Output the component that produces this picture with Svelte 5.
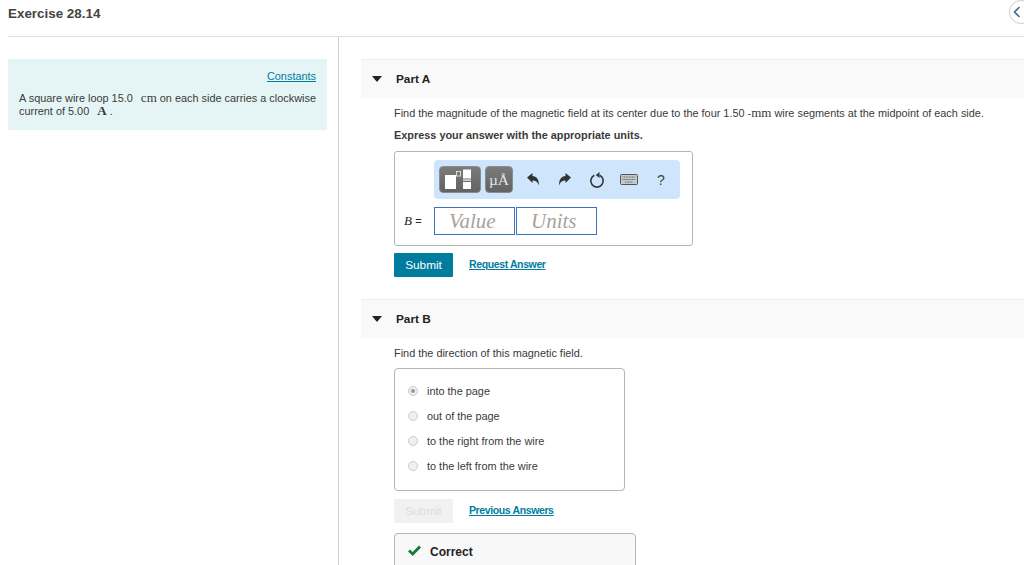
<script>
  const options = ['into the page', 'out of the page', 'to the right from the wire', 'to the left from the wire'];
</script>

<div class="page">
  <header class="top">
    <h1>Exercise 28.14</h1>
    <button class="collapse" aria-label="collapse">
      <svg width="8" height="12" viewBox="0 0 8 12"><path d="M6.5 1 1.5 6l5 5" fill="none" stroke="#4a6a8c" stroke-width="1.6" /></svg>
    </button>
  </header>

  <div class="columns">
    <aside class="left">
      <div class="intro">
        <a class="constants" href="#c">Constants</a>
        <p>A square wire loop 15.0 <span class="unit gap">cm</span> on each side carries a clockwise current of 5.00 <span class="unit gap bold">A</span> .</p>
      </div>
    </aside>

    <main class="right">
      <section>
        <div class="part-head">
          <svg class="caret" width="10" height="6" viewBox="0 0 10 6"><path d="M0 0h10L5 6z" fill="#222" /></svg>
          <span>Part A</span>
        </div>
        <div class="part-body">
          <p class="q">Find the magnitude of the magnetic field at its center due to the four 1.50 -<span class="unit">mm</span> wire segments at the midpoint of each side.</p>
          <p class="q strong">Express your answer with the appropriate units.</p>

          <div class="answer">
            <div class="toolbar">
              <div class="tool wide">
                <svg width="40" height="25" viewBox="0 0 40 25">
                  <rect x="5" y="8" width="11" height="14" fill="#fff" />
                  <rect x="16.500" y="4.500" width="4" height="4.500" fill="none" stroke="#ddd" stroke-width="1" />
                  <rect x="23" y="2.500" width="8" height="9" fill="#fff" />
                  <rect x="23" y="12.500" width="8" height="1.200" fill="#fff" />
                  <rect x="23" y="15" width="8" height="7" fill="#fff" />
                </svg>
              </div>
              <div class="tool narrow"><span>µÅ</span></div>
              <div class="action">
                <svg width="14" height="15" viewBox="0 0 14 15"><path d="M1 5.500 6.500 1v3c4 .2 6.500 3 6.500 9.500-1.200-3.500-3-5-6.500-5v2.500z" fill="#333" /></svg>
              </div>
              <div class="action">
                <svg width="14" height="15" viewBox="0 0 14 15"><path d="M13 5.500 7.500 1v3C3.500 4.200 1 7 1 13.500c1.200-3.500 3-5 6.500-5V11z" fill="#333" /></svg>
              </div>
              <div class="action">
                <svg width="16" height="17" viewBox="0 0 16 17"><path d="M5.300 4.300a6.200 6.200 0 1 0 5.400 0" fill="none" stroke="#333" stroke-width="1.600" /><path d="M10.500 1v6L6.800 4z" fill="#333" /></svg>
              </div>
              <div class="action">
                <svg width="18" height="11" viewBox="0 0 18 11"><rect x=".5" y=".5" width="17" height="10" rx="1" fill="#c4c8cd" stroke="#555" /><path d="M2.500 3h13M2.500 5.500h13M5 8h8" stroke="#666" stroke-width="1" stroke-dasharray="1 .6" /></svg>
              </div>
              <div class="action help">?</div>
            </div>
            <div class="inputs">
              <span class="var"><i>B</i> <small>=</small></span>
              <div class="field">Value</div>
              <div class="field">Units</div>
            </div>
          </div>

          <div class="submit-row">
            <button class="submit">Submit</button>
            <a href="#r">Request Answer</a>
          </div>
        </div>
      </section>

      <section class="second">
        <div class="part-head">
          <svg class="caret" width="10" height="6" viewBox="0 0 10 6"><path d="M0 0h10L5 6z" fill="#222" /></svg>
          <span>Part B</span>
        </div>
        <div class="part-body">
          <p class="q direction">Find the direction of this magnetic field.</p>
          <div class="choices">
            {#each options as option, i}
              <div class="choice">
                <span class="radio" class:on={i === 0}></span>
                <span>{option}</span>
              </div>
            {/each}
          </div>
          <div class="submit-row">
            <button class="submit off" disabled>Submit</button>
            <a href="#p">Previous Answers</a>
          </div>
          <div class="correct">
            <svg width="13" height="11" viewBox="0 0 13 11"><path d="M1 5.500 4.700 9 12 1.500" fill="none" stroke="#137a3c" stroke-width="2.800" /></svg>
            <span>Correct</span>
          </div>
        </div>
      </section>
    </main>
  </div>
</div>

<style>
  :global(body) {
    margin: 0;
    background: #fff;
    overflow: hidden;
  }

  .page {
    width: 1024px;
    height: 565px;
    overflow: hidden;
    font-family: "Liberation Sans", Arial, sans-serif;
    font-size: 10.900px;
    color: #3a3a3a;
    padding-left: 8px;
    box-sizing: border-box;
  }

  .top {
    height: 36px;
    display: flex;
    justify-content: space-between;
    border-bottom: 1px solid #dcdfe2;
    box-sizing: content-box;
  }

  h1 {
    margin: 6px 0 0;
    font-size: 13.400px;
    line-height: 15px;
    font-weight: bold;
    color: #444;
  }

  .collapse {
    width: 24px;
    height: 24px;
    margin: 0 -9px 0 0;
    padding: 0 0 0 3px;
    background: #fff;
    border: 1px solid #ccc;
    border-radius: 50%;
    display: flex;
    align-items: center;
    justify-content: flex-start;
  }

  .columns {
    display: flex;
    height: 528px;
  }

  .left {
    width: 330px;
    padding-top: 22px;
    box-sizing: content-box;
    border-right: 1px solid #c6d3dc;
  }

  .intro {
    width: 319px;
    height: 71px;
    box-sizing: border-box;
    padding: 11px 11px 0;
    background: #e5f5f6;
    line-height: 13px;
    display: flex;
    flex-direction: column;
  }

  .constants {
    align-self: flex-end;
    margin-bottom: 9px;
  }

  .intro p {
    margin: 0;
  }

  a {
    color: #007c9e;
    text-decoration: underline;
  }

  .unit {
    font-family: "Liberation Serif", serif;
    font-size: 13px;
    line-height: 0;
  }

  .gap {
    margin-left: 5px;
  }

  .bold {
    font-weight: bold;
  }

  .right {
    flex: 1;
    padding: 22px 0 0 22px;
    min-width: 0;
  }

  .part-head {
    height: 39px;
    display: flex;
    align-items: center;
    background: #f9f9f9;
    border-top: 1px solid #eee;
    box-sizing: border-box;
    font-weight: bold;
    font-size: 11.800px;
    color: #222;
  }

  .caret {
    margin: 0 14px 0 11px;
  }

  .part-body {
    padding-left: 33px;
  }

  .q {
    margin: 9px 0 0;
    line-height: 13px;
  }

  .q.strong {
    font-weight: bold;
    margin-top: 9px;
  }

  .answer {
    width: 299px;
    height: 95px;
    margin-top: 9px;
    box-sizing: border-box;
    border: 1px solid #b5b5b5;
    border-radius: 3px;
    padding: 8px 0 0 39px;
  }

  .toolbar {
    width: 246px;
    height: 39px;
    background: #cfe5fc;
    border-radius: 4px;
    display: flex;
    align-items: center;
    gap: 4px;
    padding-left: 5px;
    box-sizing: border-box;
  }

  .tool {
    height: 27px;
    background: linear-gradient(#7c7b7b, #636262);
    border: 1px solid #8c8c8c;
    border-radius: 4px;
    box-sizing: border-box;
    display: flex;
    align-items: center;
    justify-content: center;
  }

  .tool.wide {
    width: 42px;
  }

  .tool.narrow {
    width: 28px;
    color: #e4e4e4;
    font-family: "Liberation Serif", serif;
    font-size: 15.500px;
  }

  .action {
    width: 32px;
    margin-right: -4px;
    display: flex;
    align-items: center;
    justify-content: center;
  }

  .help {
    font-size: 14px;
    color: #444;
  }

  .inputs {
    display: flex;
    align-items: center;
    margin: 8px 0 0 -39px;
  }

  .var {
    width: 39px;
    box-sizing: border-box;
    padding-left: 9px;
    font-family: "Liberation Serif", serif;
    font-size: 13px;
    color: #222;
  }

  .var small {
    font-family: "Liberation Sans", Arial, sans-serif;
    font-size: 11px;
  }

  .field {
    width: 81px;
    height: 28px;
    box-sizing: border-box;
    margin-right: 1px;
    border: 1px solid #3a73c8;
    padding-left: 14px;
    font-family: "Liberation Serif", serif;
    font-style: italic;
    font-size: 21px;
    line-height: 26px;
    color: #a9a29a;
  }

  .submit-row {
    display: flex;
    align-items: center;
    gap: 16px;
    margin-top: 7px;
    font-weight: bold;
    font-size: 10.500px;
    letter-spacing: -.38px;
  }

  .submit-row a {
    margin-bottom: 3px;
  }

  .submit {
    width: 59px;
    height: 24px;
    padding: 0;
    border: 0;
    border-radius: 1px;
    background: #007c9e;
    color: #fff;
    font: 11.800px "Liberation Sans", Arial, sans-serif;
  }

  .submit.off {
    background: #f1f1f1;
    color: #ddd;
  }

  .second {
    margin-top: 22px;
  }

  .choices {
    width: 231px;
    height: 123px;
    margin-top: 8px;
    box-sizing: border-box;
    border: 1px solid #b5b5b5;
    border-radius: 4px;
    padding: 9px 0 0 13px;
  }

  .choice {
    height: 25px;
    display: flex;
    align-items: center;
    gap: 9px;
  }

  .radio {
    width: 10px;
    height: 10px;
    box-sizing: border-box;
    border: 1px solid #ccc;
    border-radius: 50%;
    background: #efefef;
    position: relative;
  }

  .radio.on::after {
    content: "";
    position: absolute;
    left: 2px;
    top: 2px;
    width: 4px;
    height: 4px;
    border-radius: 50%;
    background: #999;
  }

  .choices + .submit-row {
    margin-top: 8px;
  }

  .correct {
    width: 242px;
    height: 60px;
    margin-top: 10px;
    box-sizing: border-box;
    border: 1px solid #b5b5b5;
    border-radius: 4px;
    background: #f8f8f8;
    padding: 11px 0 0 13px;
    display: flex;
    align-items: flex-start;
    gap: 9px;
    font-weight: bold;
    font-size: 12px;
    color: #222;
  }
</style>
